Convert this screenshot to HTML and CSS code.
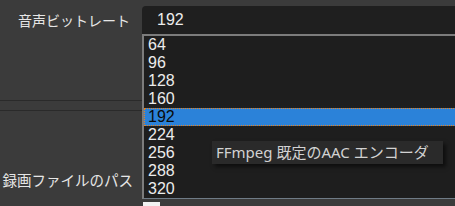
FILE: index.html
```html
<!DOCTYPE html>
<html lang="ja">
  <head>
    <meta charset="UTF-8" />
    <title>出力設定</title>
    <link rel="stylesheet" href="styles.css">
  </head>
  <body>
    <div class="settings">
      <div class="row">
        <div class="label">音声ビットレート</div>
        <div class="combo">192</div>
      </div>

      <div class="divider"></div>

      <div class="row row-path">
        <div class="label">録画ファイルのパス</div>
      </div>
      <div class="row row-check">
        <span class="checkbox"></span>
      </div>

      <!-- opened dropdown of the bitrate combo -->
      <ul class="dropdown">
        <li>64</li>
        <li>96</li>
        <li>128</li>
        <li>160</li>
        <li class="selected">192</li>
        <li>224</li>
        <li>256</li>
        <li>288</li>
        <li>320</li>
      </ul>

      <div class="tooltip">FFmpeg 既定のAAC エンコーダ</div>
    </div>
  </body>
</html>
```

FILE: styles.css
```css
* {
  margin: 0;
  padding: 0;
  box-sizing: border-box;
}

html,
body {
  overflow: hidden;
}

body {
  background: #3b3b3b;
  color: #e6e6e6;
  font-family: "Noto Sans CJK JP", "Noto Sans", sans-serif;
  font-size: 14px;
  width: 455px;
  height: 206px;
}

.settings {
  position: relative;
  height: 206px;
  overflow: hidden;
}

.row {
  display: flex;
  align-items: center;
  padding-top: 6px;
}

.label {
  width: 142px;
  padding-right: 12px;
  text-align: right;
  white-space: nowrap;
}

.combo {
  flex: 1;
  height: 28px;
  line-height: 28px;
  padding-left: 15px;
  background: #1f1f1f;
  border-radius: 4px 0 0 0;
  font-family: "Liberation Sans", sans-serif;
  font-size: 16px;
  color: #ececec;
}

.divider {
  margin-top: 66px;
  width: 142px;
  height: 11px;
  border-top: 1px solid #2a2a2a;
  border-bottom: 1px solid #2a2a2a;
}

.row-path {
  padding-top: 58px;
}

.row-path .label {
  width: 133px;
  padding-right: 0;
  font-size: 14.5px;
}

.row-check {
  padding-top: 12px;
  padding-left: 143px;
}

.checkbox {
  display: inline-block;
  width: 17px;
  height: 17px;
  background: #f2f2f2;
}

.dropdown {
  position: absolute;
  left: 142px;
  top: 34px;
  width: 330px;
  height: 165px;
  list-style: none;
  background: #1e1e1e;
  border: 2px solid #7c7c7c;
  border-bottom: 1px solid #6f7b86;
  border-right: none;
  font-family: "Liberation Sans", sans-serif;
  font-size: 16px;
  color: #ececec;
}

.dropdown li {
  height: 18px;
  line-height: 18px;
  padding-left: 4px;
}

.dropdown .selected {
  background: #2b82d9;
  color: #0a0a0a;
  outline: 1px dotted #e8821c;
  outline-offset: -1px;
}

.tooltip {
  position: absolute;
  left: 212px;
  top: 141px;
  width: 231px;
  height: 23px;
  line-height: 23px;
  padding-left: 4px;
  background: #2a2a2a;
  color: #d2d2d2;
  font-family: "Noto Sans", "Noto Sans CJK JP", sans-serif;
  font-size: 15px;
  white-space: nowrap;
  box-shadow: 3px 3px 4px rgba(0, 0, 0, 0.55);
}
```
